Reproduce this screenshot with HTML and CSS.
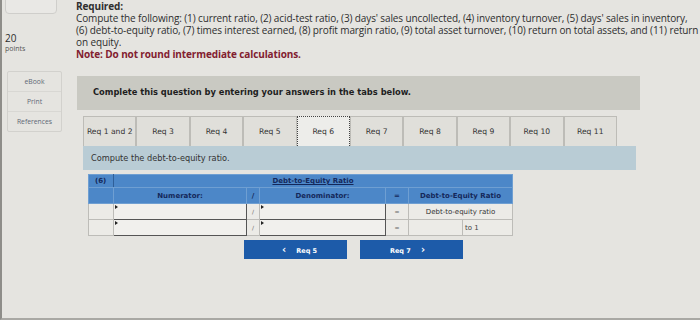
FILE: index.html
```html
<!DOCTYPE html>
<html lang="en">
<head>
    <meta charset="UTF-8">
    <title>Debt-to-Equity Ratio</title>
    <link rel="stylesheet" href="styles.css">
</head>
<body>
    <div class="page">
        <!-- Left rail -->
        <div class="side">
            <div class="prev-card"></div>
            <div class="score">
                <div class="score-num">20</div>
                <div class="score-label">points</div>
            </div>
            <div class="side-links">
                <div class="side-link">eBook</div>
                <div class="side-link">Print</div>
                <div class="side-link">References</div>
            </div>
        </div>

        <!-- Question -->
        <div class="main">
            <div class="prompt">
                <div class="prompt-title">Required:</div>
                <p>Compute the following: (1) current ratio, (2) acid-test ratio, (3) days' sales uncollected, (4) inventory turnover, (5) days' sales in inventory,<br>(6) debt-to-equity ratio, (7) times interest earned, (8) profit margin ratio, (9) total asset turnover, (10) return on total assets, and (11) return<br>on equity.</p>
                <div class="note">Note: Do not round intermediate calculations.</div>
            </div>

            <div class="widget">
                <div class="band">Complete this question by entering your answers in the tabs below.</div>

                <div class="tabs">
                    <div class="tab">Req 1 and 2</div>
                    <div class="tab">Req 3</div>
                    <div class="tab">Req 4</div>
                    <div class="tab">Req 5</div>
                    <div class="tab active">Req 6</div>
                    <div class="tab">Req 7</div>
                    <div class="tab">Req 8</div>
                    <div class="tab">Req 9</div>
                    <div class="tab">Req 10</div>
                    <div class="tab">Req 11</div>
                </div>
                <div class="instruction">Compute the debt-to-equity ratio.</div>

                <table class="ratio-table">
                    <tr class="head-top">
                        <th class="num-col">(6)</th>
                        <th colspan="6" class="title"><span>Debt-to-Equity Ratio</span></th>
                    </tr>
                    <tr class="head-cols">
                        <th></th>
                        <th class="w-num">Numerator:</th>
                        <th class="w-op">/</th>
                        <th class="w-den">Denominator:</th>
                        <th class="w-eq">=</th>
                        <th colspan="2" class="w-res">Debt-to-Equity Ratio</th>
                    </tr>
                    <tr>
                        <td></td>
                        <td class="input"><i class="mark"></i></td>
                        <td class="op">/</td>
                        <td class="input"><i class="mark"></i></td>
                        <td class="op">=</td>
                        <td colspan="2" class="label">Debt-to-equity ratio</td>
                    </tr>
                    <tr>
                        <td></td>
                        <td class="input"><i class="mark"></i></td>
                        <td class="op">/</td>
                        <td class="input"><i class="mark"></i></td>
                        <td class="op">=</td>
                        <td class="answer"></td>
                        <td class="unit">to 1</td>
                    </tr>
                </table>

                <div class="nav">
                    <button class="nav-btn"><span class="chev">&lsaquo;</span> Req 5</button>
                    <button class="nav-btn">Req 7 <span class="chev">&rsaquo;</span></button>
                </div>
            </div>
        </div>
    </div>
</body>
</html>
```

FILE: styles.css
```css
body {
    margin: 0;
    background: #e5e4e0;
    font-family: "Open Sans", Arial, sans-serif;
    color: #2e2e2e;
}
.page {
    display: flex;
    height: 320px;
    border-left: 2px solid #8e8d89;
    border-bottom: 2px solid #a9a8a4;
    box-sizing: border-box;
    overflow: hidden;
}

/* left rail */
.side {
    width: 74px;
    flex: none;
}
.prev-card {
    width: 50px;
    height: 22px;
    margin: -10px 0 0 3px;
    border: 1px solid #cfcecb;
    border-radius: 4px;
    background: #e9e8e5;
}
.score {
    margin: 18px 0 0 3px;
}
.score-num {
    font-size: 10px;
    line-height: 12px;
}
.score-label {
    font-size: 7px;
    color: #555;
}
.side-links {
    margin: 18px 0 0 5px;
    width: 53px;
    border: 1px solid #d2d1cd;
    border-radius: 2px;
}
.side-link {
    height: 19px;
    line-height: 19px;
    text-align: center;
    font-size: 6.8px;
    color: #5e6876;
    border-bottom: 1px solid #d8d7d3;
}
.side-link:last-child {
    border-bottom: none;
}

/* question */
.main {
    flex: 1;
    min-width: 0;
}
.prompt {
    font-size: 10px;
    line-height: 12px;
    letter-spacing: -0.12px;
    white-space: nowrap;
}
.prompt p {
    margin: 0;
}
.prompt-title {
    font-weight: bold;
}
.note {
    font-weight: bold;
    color: #82202f;
}

.widget {
    margin-top: 16px;
    font-family: "DejaVu Sans", Verdana, sans-serif;
}
.band {
    width: 563px;
    height: 34px;
    line-height: 33px;
    margin-left: 1px;
    padding-left: 16px;
    box-sizing: border-box;
    background: #c9c9c2;
    font-size: 8.3px;
    font-weight: bold;
    color: #1e1e1e;
}
.tabs {
    display: flex;
    margin: 6px 0 0 7px;
}
.tab {
    width: 53.4px;
    height: 30px;
    line-height: 30px;
    text-align: center;
    font-size: 7.6px;
    color: #333;
    background: #e0dfda;
    border: 1px solid #bdbcb7;
    border-bottom: none;
    box-sizing: border-box;
}
.tab.active {
    background: #ededea;
    border: 1px dotted #444;
    border-bottom: none;
}
.instruction {
    width: 553px;
    height: 24px;
    line-height: 24px;
    margin-left: 7px;
    padding-left: 8px;
    box-sizing: border-box;
    background: #b9ccd5;
    font-size: 8.2px;
    color: #333;
}

/* ratio table */
.ratio-table {
    margin: 4px 0 0 12px;
    border-collapse: collapse;
    font-size: 7px;
    width: 425px;
}
.ratio-table th {
    background: #4c87c8;
    color: #14285a;
    font-weight: bold;
    border: 1px solid #6f9fd2;
    padding: 0;
}
.head-top th {
    height: 12px;
}
.head-top .num-col {
    width: 25px;
    text-align: left;
    padding-left: 6px;
    box-sizing: border-box;
    border-right: 1px solid #2f5f98;
}
.title span {
    text-decoration: underline;
}
.head-cols th {
    height: 15px;
}
.w-num { width: 132px; }
.w-op { width: 12px; }
.w-den { width: 125px; }
.w-eq { width: 22px; }
.ratio-table td {
    background: #ecebe7;
    border: 1px solid #bdbcb8;
    height: 15px;
    padding: 0;
    text-align: center;
    color: #444;
}
.ratio-table td.input {
    position: relative;
    background: #f1f0ed;
    border: 1px solid #555;
}
.mark {
    position: absolute;
    left: 1px;
    top: 1px;
    width: 0;
    height: 0;
    border-top: 2px solid transparent;
    border-bottom: 2px solid transparent;
    border-left: 3px solid #222;
}
.ratio-table td.op {
    color: #666;
    font-size: 6px;
}
.ratio-table td.label {
    color: #333;
}
.ratio-table td.answer {
    width: 53px;
}
.ratio-table td.unit {
    text-align: left;
    padding-left: 2px;
}

.nav {
    display: flex;
    gap: 13px;
    margin: 4px 0 0 168px;
}
.nav-btn {
    width: 103px;
    height: 19px;
    border: none;
    background: #1d5ba9;
    color: #fff;
    font-family: "DejaVu Sans", Verdana, sans-serif;
    font-size: 6.5px;
    font-weight: bold;
    padding: 0;
}
.chev {
    font-size: 10px;
    margin: 0 8px;
}
```
